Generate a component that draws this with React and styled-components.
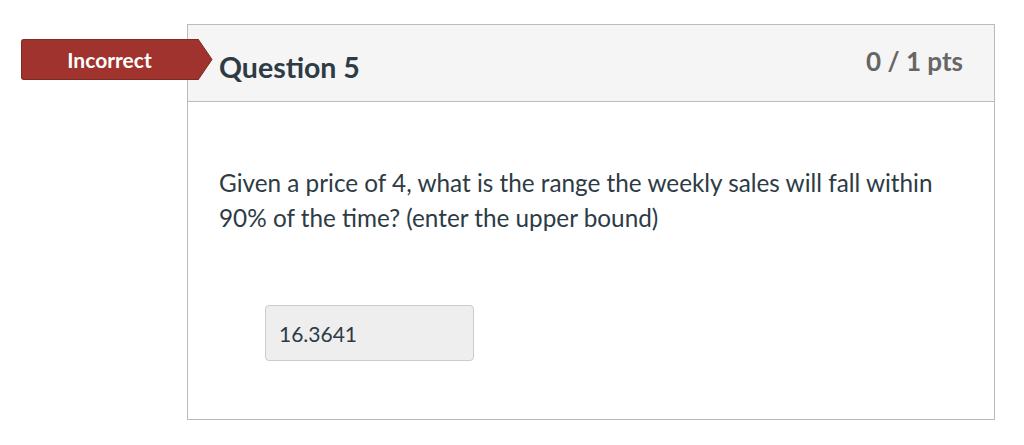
import styled, { createGlobalStyle } from 'styled-components';

const Global = createGlobalStyle`
  html, body {
    margin: 0;
    background: #fff;
    font-family: Lato, "Open Sans", sans-serif;
  }
`;

const Page = styled.div`
  position: relative;
  padding: 24px 29px 0 187px;
  height: 445px;
  box-sizing: border-box;
`;

const Card = styled.div`
  border: 1px solid #bbb;
  height: 396px;
  box-sizing: border-box;
`;

const Header = styled.div`
  display: flex;
  justify-content: space-between;
  align-items: flex-start;
  height: 77px;
  box-sizing: border-box;
  background: #f5f5f5;
  border-bottom: 1px solid #bbb;
  padding: 0 31px 0 31px;
`;

const Title = styled.h2`
  margin: 27px 0 0;
  font-size: 28.5px;
  font-weight: 700;
  color: #2d3b45;
  line-height: 30px;
`;

const Points = styled.div`
  margin-top: 21px;
  font-size: 26px;
  font-weight: 700;
  color: #666;
  line-height: 30px;
`;

const Body = styled.div`
  padding: 63px 31px 0 31px;
`;

const Text = styled.p`
  margin: 0;
  font-size: 24.3px;
  line-height: 35px;
  color: #2d3b45;
`;

const Answer = styled.div`
  margin: 70px 0 0 46px;
  width: 209px;
  height: 56px;
  box-sizing: border-box;
  background: #eee;
  border: 1px solid #ccc;
  border-radius: 4px;
  padding: 0 13px;
  display: flex;
  align-items: center;
  font-size: 21px;
  color: #2d3b45;
`;

const Badge = styled.div`
  position: absolute;
  left: 21px;
  top: 39px;
  width: 176px;
  height: 41px;
  box-sizing: border-box;
  background: #a0332d;
  border: 1px solid #7f2a24;
  border-right: none;
  border-radius: 3px 0 0 3px;
  display: flex;
  align-items: center;
  justify-content: center;
  color: #fff;
  font-size: 21px;
  font-weight: 700;
  padding-bottom: 1px;
`;

const Tip = styled.svg`
  position: absolute;
  left: 175px;
  top: -1px;
`;

export default function App() {
  return (
    <>
      <Global />
      <Page>
        <Card>
          <Header>
            <Title>Question 5</Title>
            <Points>0 / 1 pts</Points>
          </Header>
          <Body>
            <Text>
              Given a price of 4, what is the range the weekly sales will fall within
              <br />
              90% of the time? (enter the upper bound)
            </Text>
            <Answer>16.3641</Answer>
          </Body>
        </Card>
        <Badge>
          Incorrect
          <Tip width="16" height="41" viewBox="0 0 16 41">
            <path d="M0 0 L1 0 L15 20.5 L1 41 L0 41 Z" fill="#a0332d" stroke="#7f2a24" strokeWidth="1" />
            <rect x="0" y="1" width="1.5" height="39" fill="#a0332d" />
          </Tip>
        </Badge>
      </Page>
    </>
  );
}
